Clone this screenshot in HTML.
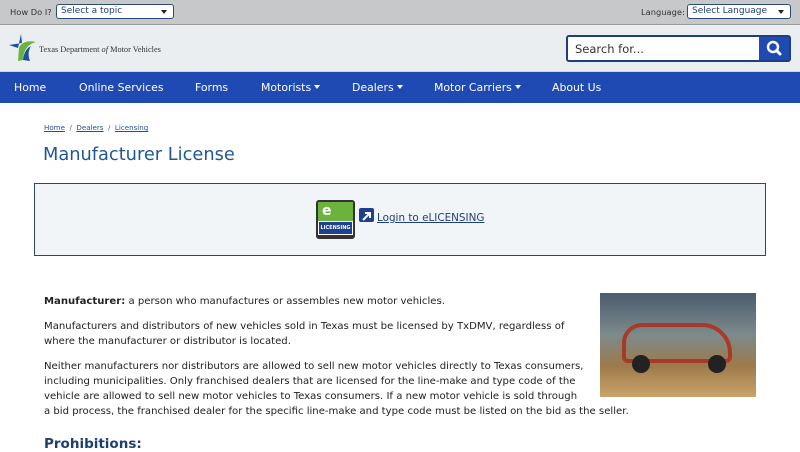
<!DOCTYPE html>
<html><head><meta charset="utf-8"><style>
*{margin:0;padding:0;box-sizing:border-box}
body{width:800px;height:450px;overflow:hidden;background:#fff;font-family:"DejaVu Sans","Liberation Sans",sans-serif;color:#222}
.top{height:24px;background:#c6c8ca;position:relative;font-size:8.3px;color:#333}
.top .l{position:absolute;left:10px;top:7px}
.sel{position:absolute;height:15px;border:1px solid #2c4a78;border-radius:3px;background:#fff;font-size:9px;color:#1f3f74;padding:1px 4px}
.sel:after{content:"";position:absolute;right:6px;top:5px;border:3px solid transparent;border-top:4px solid #222}
.hdr{position:absolute;top:24px;left:0;width:800px;height:47px;background:#ebeef1;border-top:1px solid #999}
.nav{position:absolute;top:71px;left:0;width:800px;height:32px;background:#1f4ab3;border-top:1px solid #cfd5dd;color:#fff;font-size:10.9px}
.nav span{position:absolute;top:9px}
.car:after{content:"";display:inline-block;margin-left:3px;vertical-align:2px;border:3px solid transparent;border-top:4px solid #fff;border-bottom:0}
.bc{position:absolute;top:123px;left:44px;font-size:7.1px;color:#555}
.bc a{color:#1f4e9e;text-decoration:underline}
h1{position:absolute;top:144px;left:43px;font-weight:normal;font-size:17.8px;color:#1f5796}
.box{position:absolute;left:34px;top:183px;width:732px;height:73px;border:1px solid #2a4474;background:#f2f5f8}
p{position:absolute;left:44px;font-size:10.1px;line-height:15px;color:#222;white-space:nowrap}
</style></head><body>
<div class="top"><span class="l">How Do I?</span>
<div class="sel" style="left:56px;top:4px;width:118px">Select a topic</div>
<span style="position:absolute;left:641px;top:7px">Language:</span>
<div class="sel" style="left:687px;top:4px;width:104px">Select Language</div></div>
<div class="hdr">
<svg style="position:absolute;left:9px;top:9px" width="30" height="28" viewBox="0 0 30 28"><path d="M12 0 L13 9 L0 11 L9 14 Z" fill="#1d4ea3"/><path d="M10 14 C12 8 20 6 27 8 C20 10 15 14 14 26 L9 27 Z" fill="#6cb33e"/><path d="M14 26 C15 18 18 14 22 12 C19 17 19 22 21 27 Z" fill="#1d4ea3"/></svg>
<span style="position:absolute;left:39px;top:20px;font-family:'Liberation Serif',serif;font-size:8.3px;color:#333">Texas Department <i>of</i> Motor Vehicles</span>
<div style="position:absolute;left:566px;top:10px;width:225px;height:27px;border:2px solid #1b3f7f;border-radius:3px;background:#fff">
<span style="position:absolute;left:7px;top:5px;font-size:11.5px;color:#333">Search for...</span>
<div style="position:absolute;right:0;top:0;width:30px;height:23px;background:#1f4ab3"><svg width="30" height="23" viewBox="0 0 30 23"><circle cx="14" cy="10" r="5" fill="none" stroke="#fff" stroke-width="2.4"/><path d="M17.5 13.5 L21 17" stroke="#fff" stroke-width="3" stroke-linecap="round"/></svg></div></div></div>
<div class="nav"><span style="left:14px">Home</span><span style="left:79px">Online Services</span><span style="left:195px">Forms</span><span class="car" style="left:261px">Motorists</span><span class="car" style="left:352px">Dealers</span><span class="car" style="left:434px">Motor Carriers</span><span style="left:552px">About Us</span></div>
<div class="bc"><a>Home</a> &nbsp;/&nbsp; <a>Dealers</a> &nbsp;/&nbsp; <a>Licensing</a></div>
<h1>Manufacturer License</h1>
<div class="box">
<div style="position:absolute;left:281px;top:16px;width:39px;height:39px;background:#333;border-radius:3px;padding:2px">
<div style="background:#6cb33e;height:19px;color:#fff;font-weight:bold;font-size:14px;padding-left:4px;line-height:18px">e</div>
<div style="background:#1f3f8f;height:14px;color:#fff;font-size:5px;font-weight:bold;text-align:center;line-height:12px;border:1px solid #fff">LICENSING</div></div>
<div style="position:absolute;left:324px;top:24px;width:15px;height:14px;background:#1f3f8f;border-radius:2px"><svg width="15" height="14"><path d="M4 11 L11 4 M6 4 H11 V9" stroke="#fff" stroke-width="2" fill="none"/></svg></div>
<span style="position:absolute;left:342px;top:28px;font-size:10.4px;color:#1f3f74;text-decoration:underline">Login to eLICENSING</span></div>
<p style="top:294px"><b>Manufacturer:</b> a person who manufactures or assembles new motor vehicles.</p>
<p style="top:319px">Manufacturers and distributors of new vehicles sold in Texas must be licensed by TxDMV, regardless of<br>where the manufacturer or distributor is located.</p>
<p style="top:359px">Neither manufacturers nor distributors are allowed to sell new motor vehicles directly to Texas consumers,<br>including municipalities. Only franchised dealers that are licensed for the line-make and type code of the<br>vehicle are allowed to sell new motor vehicles to Texas consumers. If a new motor vehicle is sold through<br>a bid process, the franchised dealer for the specific line-make and type code must be listed on the bid as the seller.</p>
<div style="position:absolute;left:600px;top:293px;width:156px;height:104px;background:linear-gradient(#4a5c6e 0%,#7d8a8c 40%,#9c7a4a 70%,#c9a46a 100%)">
<div style="position:absolute;left:22px;top:30px;width:110px;height:40px;border:4px solid #a83a2a;border-radius:20px 30px 6px 6px"></div>
<div style="position:absolute;left:32px;top:62px;width:18px;height:18px;border-radius:50%;background:#222"></div>
<div style="position:absolute;left:108px;top:62px;width:18px;height:18px;border-radius:50%;background:#222"></div></div>
<div style="position:absolute;left:44px;top:436px;font-size:13.5px;font-weight:bold;color:#1f3f74">Prohibitions:</div>
</body></html>
